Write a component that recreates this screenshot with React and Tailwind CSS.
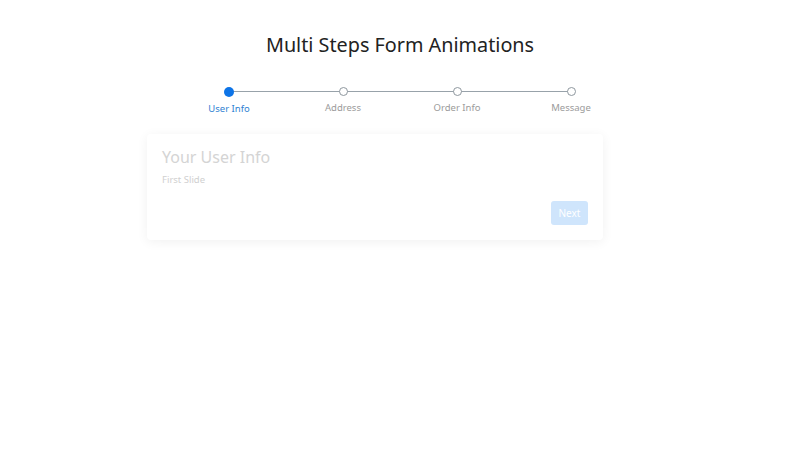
import React from 'react';

const steps = ['User Info', 'Address', 'Order Info', 'Message'];

const Stepper = ({ current }) => {
  return (
    <div className="relative mx-auto grid w-[456px] grid-cols-4">
      <div className="absolute left-[57px] right-[57px] top-[4px] h-px bg-[#98a2aa]" />
      {steps.map((label, i) => (
        <div key={label} className="relative flex flex-col items-center">
          {i === current ? (
            <span className="h-[10px] w-[10px] rounded-full bg-[#0d74e7]" />
          ) : (
            <span className="h-[9px] w-[9px] rounded-full border border-[#8e979e] bg-white" />
          )}
          <span
            className={
              'mt-[5px] text-[9.5px] leading-[14px] ' +
              (i === current ? 'text-[#2f7fd2]' : 'text-[#9b9b9b]')
            }
          >
            {label}
          </span>
        </div>
      ))}
    </div>
  );
};

export default function App() {
  return (
    <div className="min-h-[450px] w-full bg-white font-['Noto_Sans','Open_Sans',sans-serif]">
      <h1 className="pt-[30px] text-center text-[19.8px] font-normal leading-[30px] text-[#222]">
        Multi Steps Form Animations
      </h1>
      <div className="mt-[27px]">
        <Stepper current={0} />
      </div>
      <div className="mt-[18px] flex justify-center">
        <div className="w-[456px] -translate-x-[25px] rounded-[4px] bg-white px-[15px] pb-[15px] pt-[12px] shadow-[0_2px_12px_rgba(0,0,0,0.06)]">
          <h2 className="text-[16px] leading-[22px] text-[#d4d4d4]">Your User Info</h2>
          <p className="mt-[5px] text-[9.5px] leading-[14px] text-[#d0d0d0]">First Slide</p>
          <div className="mt-[14px] flex justify-end">
            <button className="h-[24px] w-[37px] rounded-[3px] bg-[#cfe5fc] text-[10px] text-white">
              Next
            </button>
          </div>
        </div>
      </div>
    </div>
  );
}
